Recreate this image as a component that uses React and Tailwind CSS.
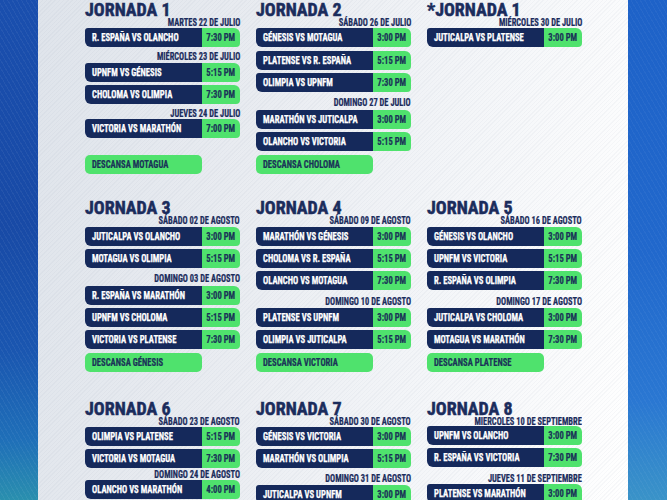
const SECTIONS = [
  {
    h: 'h-[198px]',
    cols: [
      {
        title: 'JORNADA 1',
        items: [
          { d: 'MARTES 22 DE JULIO', mt: 'mt-0' },
          { m: 'R. ESPAÑA VS OLANCHO', t: '7:30 PM', mt: 'mt-0' },
          { d: 'MIÉRCOLES 23 DE JULIO', mt: 'mt-1' },
          { m: 'UPNFM VS GÉNESIS', t: '5:15 PM', mt: 'mt-px' },
          { m: 'CHOLOMA VS OLIMPIA', t: '7:30 PM', mt: 'mt-[3px]' },
          { d: 'JUEVES 24 DE JULIO', mt: 'mt-1' },
          { m: 'VICTORIA VS MARATHÓN', t: '7:00 PM', mt: 'mt-0' },
          { r: 'DESCANSA MOTAGUA', mt: 'mt-[17px]' },
        ],
      },
      {
        title: 'JORNADA 2',
        items: [
          { d: 'SÁBADO 26 DE JULIO', mt: 'mt-0' },
          { m: 'GÉNESIS VS MOTAGUA', t: '3:00 PM', mt: 'mt-0' },
          { m: 'PLATENSE VS R. ESPAÑA', t: '5:15 PM', mt: 'mt-1' },
          { m: 'OLIMPIA VS UPNFM', t: '7:30 PM', mt: 'mt-[3px]' },
          { d: 'DOMINGO 27 DE JULIO', mt: 'mt-[5px]' },
          { m: 'MARATHÓN VS JUTICALPA', t: '3:00 PM', mt: 'mt-0.5' },
          { m: 'OLANCHO VS VICTORIA', t: '5:15 PM', mt: 'mt-[3px]' },
          { r: 'DESCANSA CHOLOMA', mt: 'mt-1' },
        ],
      },
      {
        title: '*JORNADA 1',
        items: [
          { d: 'MIÉRCOLES 30 DE JULIO', mt: 'mt-0' },
          { m: 'JUTICALPA VS PLATENSE', t: '3:00 PM', mt: 'mt-0' },
        ],
      },
    ],
  },
  {
    h: 'h-[201px]',
    cols: [
      {
        title: 'JORNADA 3',
        items: [
          { d: 'SÁBADO 02 DE AGOSTO', mt: 'mt-0' },
          { m: 'JUTICALPA VS OLANCHO', t: '3:00 PM', mt: 'mt-px' },
          { m: 'MOTAGUA VS OLIMPIA', t: '5:15 PM', mt: 'mt-[3px]' },
          { d: 'DOMINGO 03 DE AGOSTO', mt: 'mt-[5px]' },
          { m: 'R. ESPAÑA VS MARATHÓN', t: '3:00 PM', mt: 'mt-0.5' },
          { m: 'UPNFM VS CHOLOMA', t: '5:15 PM', mt: 'mt-[3px]' },
          { m: 'VICTORIA VS PLATENSE', t: '7:30 PM', mt: 'mt-[3px]' },
          { r: 'DESCANSA GÉNESIS', mt: 'mt-1' },
        ],
      },
      {
        title: 'JORNADA 4',
        items: [
          { d: 'SÁBADO 09 DE AGOSTO', mt: 'mt-0' },
          { m: 'MARATHÓN VS GÉNESIS', t: '3:00 PM', mt: 'mt-px' },
          { m: 'CHOLOMA VS R. ESPAÑA', t: '5:15 PM', mt: 'mt-[3px]' },
          { m: 'OLANCHO VS MOTAGUA', t: '7:30 PM', mt: 'mt-[3px]' },
          { d: 'DOMINGO 10 DE AGOSTO', mt: 'mt-1.5' },
          { m: 'PLATENSE VS UPNFM', t: '3:00 PM', mt: 'mt-px' },
          { m: 'OLIMPIA VS JUTICALPA', t: '5:15 PM', mt: 'mt-[3px]' },
          { r: 'DESCANSA VICTORIA', mt: 'mt-1' },
        ],
      },
      {
        title: 'JORNADA 5',
        items: [
          { d: 'SÁBADO 16 DE AGOSTO', mt: 'mt-0' },
          { m: 'GÉNESIS VS OLANCHO', t: '3:00 PM', mt: 'mt-px' },
          { m: 'UPNFM VS VICTORIA', t: '5:15 PM', mt: 'mt-[3px]' },
          { m: 'R. ESPAÑA VS OLIMPIA', t: '7:30 PM', mt: 'mt-[3px]' },
          { d: 'DOMINGO 17 DE AGOSTO', mt: 'mt-1.5' },
          { m: 'JUTICALPA VS CHOLOMA', t: '3:00 PM', mt: 'mt-px' },
          { m: 'MOTAGUA VS MARATHÓN', t: '7:30 PM', mt: 'mt-[3px]' },
          { r: 'DESCANSA PLATENSE', mt: 'mt-1' },
        ],
      },
    ],
  },
  {
    h: 'h-[101px]',
    cols: [
      {
        title: 'JORNADA 6',
        items: [
          { d: 'SÁBADO 23 DE AGOSTO', mt: 'mt-0' },
          { m: 'OLIMPIA VS PLATENSE', t: '5:15 PM', mt: 'mt-0' },
          { m: 'VICTORIA VS MOTAGUA', t: '7:30 PM', mt: 'mt-[3px]' },
          { d: 'DOMINGO 24 DE AGOSTO', mt: 'mt-px' },
          { m: 'OLANCHO VS MARATHÓN', t: '4:00 PM', mt: 'mt-0' },
        ],
      },
      {
        title: 'JORNADA 7',
        items: [
          { d: 'SÁBADO 30 DE AGOSTO', mt: 'mt-0' },
          { m: 'GÉNESIS VS VICTORIA', t: '3:00 PM', mt: 'mt-0' },
          { m: 'MARATHÓN VS OLIMPIA', t: '5:15 PM', mt: 'mt-[3px]' },
          { d: 'DOMINGO 31 DE AGOSTO', mt: 'mt-[5px]' },
          { m: 'JUTICALPA VS UPNFM', t: '3:00 PM', mt: 'mt-px' },
        ],
      },
      {
        title: 'JORNADA 8',
        items: [
          { d: 'MIERCOLES 10 DE SEPTIEMBRE', mt: 'mt-0' },
          { m: 'UPNFM VS OLANCHO', t: '3:00 PM', mt: '-mt-px' },
          { m: 'R. ESPAÑA VS VICTORIA', t: '7:30 PM', mt: 'mt-[3px]' },
          { d: 'JUEVES 11 DE SEPTIEMBRE', mt: 'mt-1.5' },
          { m: 'PLATENSE VS MARATHÓN', t: '3:00 PM', mt: 'mt-0' },
        ],
      },
    ],
  },
];

function DateLine({ text, mt }) {
  return (
    <div className={`${mt} h-[11px] shrink-0 text-right text-[10px] leading-[11px] font-bold text-[#1b2c5c] whitespace-nowrap [-webkit-text-stroke:0.2px_#1b2c5c]`}>
      <span className="inline-block origin-right scale-x-[0.84]">{text}</span>
    </div>
  );
}

function Match({ m, t, mt }) {
  return (
    <div className={`${mt} flex h-[19px] w-[155px] shrink-0`}>
      <div className="flex-1 bg-[#15295b] rounded-tl-[3px] rounded-bl-[6px] pl-[7px] text-[10px] leading-[19px] font-bold text-white whitespace-nowrap overflow-hidden [-webkit-text-stroke:0.25px_#ffffff]">
        <span className="inline-block origin-left scale-x-[0.86]">{m}</span>
      </div>
      <div className="w-[38px] bg-[#4fe26d] rounded-tr-[6px] rounded-br-[4px] text-center text-[10px] leading-[19px] font-bold text-[#1a3358] whitespace-nowrap [-webkit-text-stroke:0.2px_#1a3358]">
        <span className="inline-block scale-x-[0.86]">{t}</span>
      </div>
    </div>
  );
}

function Rest({ r, mt }) {
  return (
    <div className={`${mt} h-[19px] w-[117px] shrink-0 bg-[#4fe26d] rounded-[5px] pl-[7px] text-[10px] leading-[19px] font-bold text-[#1a3358] whitespace-nowrap [-webkit-text-stroke:0.2px_#1a3358]`}>
      <span className="inline-block origin-left scale-x-[0.86]">{r}</span>
    </div>
  );
}

function Column({ col }) {
  return (
    <div className="flex flex-col w-[155px]">
      <div className="h-[16px] text-[18px] leading-[17px] font-bold text-[#1b2c5c] whitespace-nowrap [-webkit-text-stroke:0.5px_#1b2c5c]">{col.title}</div>
      {col.items.map((it, i) =>
        it.d ? (
          <DateLine key={i} text={it.d} mt={it.mt} />
        ) : it.m ? (
          <Match key={i} m={it.m} t={it.t} mt={it.mt} />
        ) : (
          <Rest key={i} r={it.r} mt={it.mt} />
        )
      )}
    </div>
  );
}

export default function App() {
  return (
    <div className="flex w-[667px] h-[500px] overflow-hidden font-['Roboto_Condensed',sans-serif]">
      <div className="w-[38px] shrink-0 bg-[repeating-linear-gradient(60deg,rgba(255,255,255,0.05)_0_1px,transparent_1px_4px),linear-gradient(180deg,#1a4fae_0%,#184aa6_45%,#1a56b0_70%,#1f6fb8_88%,#2a8fae_100%)]" />
      <div className="w-[590px] shrink-0 pl-[47px] pt-px bg-[repeating-linear-gradient(135deg,rgba(110,125,150,0.05)_0_1px,transparent_1px_3px),linear-gradient(100deg,#dfe4eb_0%,#e9ecf1_35%,#f3f5f8_65%,#ffffff_100%)]">
        {SECTIONS.map((s, si) => (
          <div key={si} className={`${s.h} grid grid-cols-[155px_155px_155px] gap-x-4 content-start`}>
            {s.cols.map((c, ci) => (
              <Column key={ci} col={c} />
            ))}
          </div>
        ))}
      </div>
      <div className="flex-1 bg-[repeating-linear-gradient(60deg,rgba(255,255,255,0.04)_0_1px,transparent_1px_4px),linear-gradient(180deg,#1e62c8_0%,#2168cc_50%,#2a77d2_80%,#3a93c8_100%)]" />
    </div>
  );
}
